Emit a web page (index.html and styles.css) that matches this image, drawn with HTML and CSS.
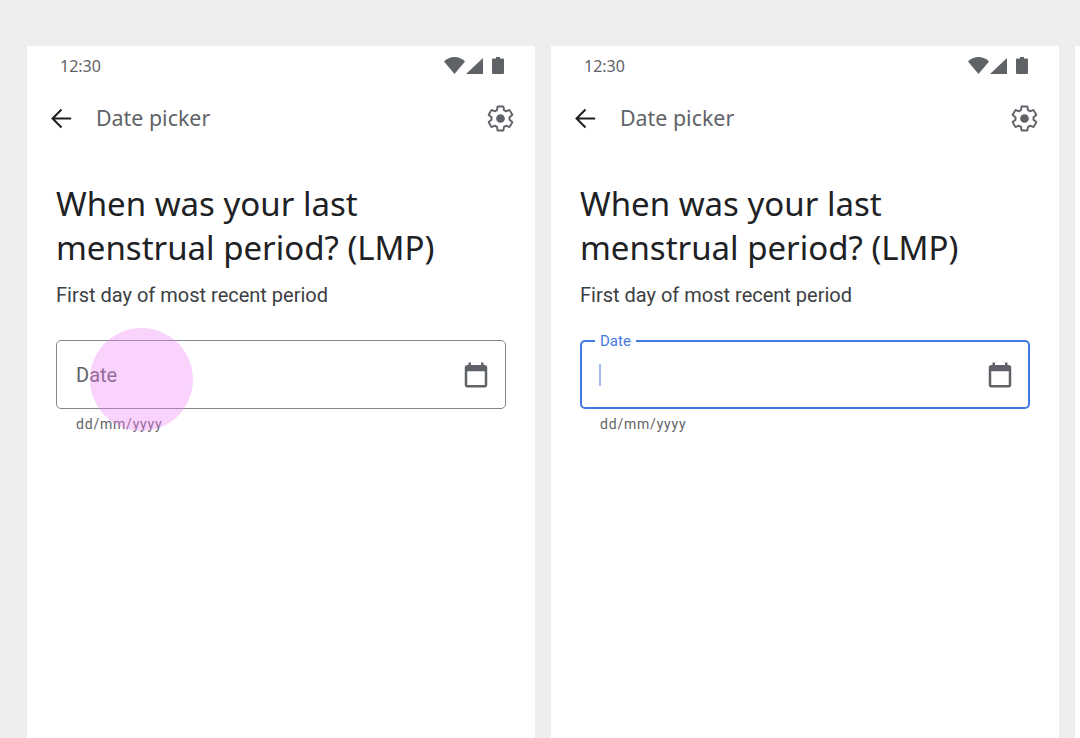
FILE: index.html
```html
<!DOCTYPE html>
<html lang="en">
<head>
<meta charset="utf-8">
<title>Date picker</title>
<link rel="stylesheet" href="styles.css">
</head>
<body>
<main class="board">
  <section class="phone">
    <div class="status">
      <span class="time">12:30</span>
      <span class="status-icons">
        <svg class="wifi" viewBox="0 0 21 17"><path d="M0 4.500C2.800 1.700 6.400 0 10.500 0S18.200 1.700 21 4.500L10.500 17z"/></svg>
        <svg class="signal" viewBox="0 0 17 16"><path d="M17 0v16H0z"/></svg>
        <svg class="battery" viewBox="0 0 12 17"><path d="M4 0h4v1.500h3a1 1 0 0 1 1 1V16a1 1 0 0 1-1 1H1a1 1 0 0 1-1-1V2.500a1 1 0 0 1 1-1h3z"/></svg>
      </span>
    </div>
    <header class="appbar">
      <svg class="back" viewBox="0 0 24 24"><path d="M20 12H5M12 4.600L4.600 12l7.400 7.400"/></svg>
      <span class="appbar-title">Date picker</span>
      <svg class="gear" viewBox="0 0 24 24"><path class="gear-ring" d="M19.430 12.980c.04-.32.07-.64.07-.98s-.03-.66-.07-.98l2.110-1.650c.19-.15.24-.42.12-.64l-2-3.460c-.12-.22-.39-.3-.61-.22l-2.490 1c-.52-.4-1.080-.73-1.690-.98l-.38-2.650A.49.49 0 0 0 14 2h-4c-.25 0-.46.18-.49.42l-.38 2.650c-.61.25-1.170.59-1.690.98l-2.490-1a.57.57 0 0 0-.61.22l-2 3.460c-.13.22-.07.49.12.64l2.110 1.650c-.04.32-.07.65-.07.98s.03.66.07.98l-2.110 1.650c-.19.15-.24.42-.12.64l2 3.460c.12.22.39.3.61.22l2.490-1c.52.4 1.080.73 1.690.98l.38 2.650c.03.24.24.42.49.42h4c.25 0 .46-.18.49-.42l.38-2.650c.61-.25 1.170-.59 1.690-.98l2.490 1c.23.09.49 0 .61-.22l2-3.460c.12-.22.07-.49-.12-.64z"/><circle class="gear-dot" cx="12" cy="12" r="3.600"/></svg>
    </header>
    <div class="content">
      <h1 class="question">When was your last<br>menstrual period? (LMP)</h1>
      <p class="hint">First day of most recent period</p>
      <div class="field">
        <span class="placeholder">Date</span>
        <svg class="calendar" viewBox="0 0 24 24"><path d="M19 4h-1V2h-2v2H8V2H6v2H5c-1.100 0-2 .9-2 2v14c0 1.100.9 2 2 2h14c1.100 0 2-.9 2-2V6c0-1.100-.9-2-2-2zm0 16H5V9h14z"/></svg>
      </div>
      <p class="helper">dd/mm/yyyy</p>
    </div>
    <div class="touch"></div>
  </section>

  <section class="phone">
    <div class="status">
      <span class="time">12:30</span>
      <span class="status-icons">
        <svg class="wifi" viewBox="0 0 21 17"><path d="M0 4.500C2.800 1.700 6.400 0 10.500 0S18.200 1.700 21 4.500L10.500 17z"/></svg>
        <svg class="signal" viewBox="0 0 17 16"><path d="M17 0v16H0z"/></svg>
        <svg class="battery" viewBox="0 0 12 17"><path d="M4 0h4v1.500h3a1 1 0 0 1 1 1V16a1 1 0 0 1-1 1H1a1 1 0 0 1-1-1V2.500a1 1 0 0 1 1-1h3z"/></svg>
      </span>
    </div>
    <header class="appbar">
      <svg class="back" viewBox="0 0 24 24"><path d="M20 12H5M12 4.600L4.600 12l7.400 7.400"/></svg>
      <span class="appbar-title">Date picker</span>
      <svg class="gear" viewBox="0 0 24 24"><path class="gear-ring" d="M19.430 12.980c.04-.32.07-.64.07-.98s-.03-.66-.07-.98l2.110-1.650c.19-.15.24-.42.12-.64l-2-3.460c-.12-.22-.39-.3-.61-.22l-2.490 1c-.52-.4-1.080-.73-1.690-.98l-.38-2.650A.49.49 0 0 0 14 2h-4c-.25 0-.46.18-.49.42l-.38 2.650c-.61.25-1.170.59-1.690.98l-2.490-1a.57.57 0 0 0-.61.22l-2 3.460c-.13.22-.07.49.12.64l2.110 1.650c-.04.32-.07.65-.07.98s.03.66.07.98l-2.110 1.650c-.19.15-.24.42-.12.64l2 3.460c.12.22.39.3.61.22l2.490-1c.52.4 1.080.73 1.690.98l.38 2.650c.03.24.24.42.49.42h4c.25 0 .46-.18.49-.42l.38-2.650c.61-.25 1.170-.59 1.690-.98l2.490 1c.23.09.49 0 .61-.22l2-3.460c.12-.22.07-.49-.12-.64z"/><circle class="gear-dot" cx="12" cy="12" r="3.600"/></svg>
    </header>
    <div class="content">
      <h1 class="question">When was your last<br>menstrual period? (LMP)</h1>
      <p class="hint">First day of most recent period</p>
      <div class="field field-focus">
        <span class="float-label">Date</span>
        <span class="caret"></span>
        <svg class="calendar" viewBox="0 0 24 24"><path d="M19 4h-1V2h-2v2H8V2H6v2H5c-1.100 0-2 .9-2 2v14c0 1.100.9 2 2 2h14c1.100 0 2-.9 2-2V6c0-1.100-.9-2-2-2zm0 16H5V9h14z"/></svg>
      </div>
      <p class="helper">dd/mm/yyyy</p>
    </div>
  </section>

  <section class="phone"></section>
</main>
</body>
</html>
```

FILE: styles.css
```css
* { box-sizing: border-box; }
html, body { margin: 0; height: 100%; overflow: hidden; background: #eeeeee; }
.board {
  display: flex;
  gap: 16px;
  height: 738px;
  padding: 46px 0 0 27px;
  overflow: hidden;
  font-family: Roboto, "Liberation Sans", sans-serif;
}
.phone {
  position: relative;
  flex: 0 0 508px;
  background: #ffffff;
}
.status {
  display: flex;
  align-items: center;
  justify-content: space-between;
  height: 40px;
  padding: 0 31px 0 33px;
}
.time { font: 400 16px/20px "Noto Sans", sans-serif; color: #5f6368; }
.status-icons { display: flex; align-items: center; margin-top: -1px; }
.status-icons svg { display: block; fill: #5f6368; }
.wifi { width: 21px; height: 17px; }
.signal { width: 17px; height: 16px; margin-left: 1px; }
.battery { width: 12px; height: 17px; margin-left: 9px; }
.appbar {
  display: flex;
  align-items: center;
  height: 64px;
  padding: 0 20.500px 0 20px;
}
.back { width: 29px; height: 29px; fill: none; stroke: #202124; stroke-width: 1.700; }
.appbar-title { flex: 1; margin-left: 20px; font: 400 21.400px/28px "Noto Sans", sans-serif; color: #5f6368; }
.gear { width: 29px; height: 29px; }
.gear-ring { fill: none; stroke: #5f6368; stroke-width: 1.600; stroke-linejoin: round; }
.gear-dot { fill: #5f6368; }
.content { padding: 32px 29px 0 29px; }
.question {
  margin: 0;
  font: 400 33px/44px "Noto Sans", sans-serif;
  color: #202124;
}
.hint { margin: 13px 0 0; font-size: 20px; line-height: 24px; color: #3c4043; }
.field {
  position: relative;
  display: flex;
  align-items: center;
  justify-content: space-between;
  height: 69px;
  margin-top: 33px;
  padding: 0 14px 0 19px;
  border: 1px solid #80868b;
  border-radius: 5px;
}
.placeholder { font-size: 20px; color: #5f6368; }
.calendar { width: 30px; height: 30px; fill: #5f6368; }
.field-focus { border: 2px solid #4479e1; padding: 0 13px 0 17px; }
.float-label {
  position: absolute;
  left: 13px;
  top: -9px;
  padding: 0 5px;
  background: #ffffff;
  font-size: 15px;
  line-height: 16px;
  color: #4479e1;
}
.caret { width: 2px; height: 22px; background: #a3bdf0; }
.helper { margin: 7px 0 0 20px; font-size: 14px; line-height: 16px; letter-spacing: .8px; color: #5f6368; }
.touch {
  position: absolute;
  left: 63px;
  top: 282px;
  width: 103px;
  height: 103px;
  border-radius: 50%;
  background: rgba(240, 130, 245, .35);
}
```
